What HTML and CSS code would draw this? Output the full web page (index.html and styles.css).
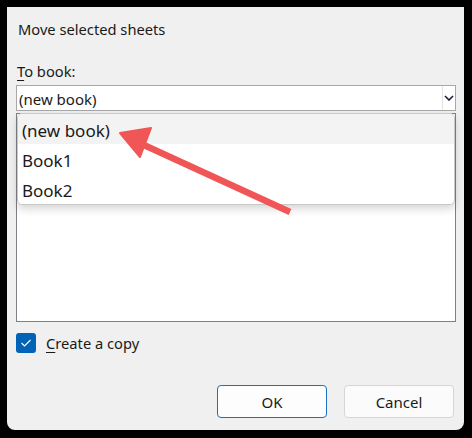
FILE: index.html
```html
<!DOCTYPE html>
<html>
<head>
<meta charset="utf-8">
<link rel="stylesheet" href="styles.css">
</head>
<body>
<div class="dialog">
  <div class="title">Move selected sheets</div>
  <div class="label"><u>T</u>o book:</div>
  <div class="combo">
    <span class="combo-text">(new book)</span>
    <span class="combo-btn">
      <svg width="10" height="6" viewBox="0 0 10 6"><path d="M1 1 L5 5 L9 1" fill="none" stroke="#1b1b3a" stroke-width="1.6"/></svg>
    </span>
  </div>
  <div class="list-area">
    <div class="listbox"></div>
    <div class="popup">
      <div class="item active">(new book)</div>
      <div class="item">Book1</div>
      <div class="item">Book2</div>
    </div>
  </div>
  <div class="check-row">
    <span class="checkbox">
      <svg width="12" height="10" viewBox="0 0 12 10"><path d="M1.5 5 L4.5 8 L10.5 2" fill="none" stroke="#ffffff" stroke-width="1.1"/></svg>
    </span>
    <span class="check-label"><u>C</u>reate a copy</span>
  </div>
  <div class="buttons">
    <button class="btn primary">OK</button>
    <button class="btn">Cancel</button>
  </div>
</div>
<svg class="annot" width="472" height="438" viewBox="0 0 472 438">
  <line x1="133" y1="140" x2="290" y2="212" stroke="#f05656" stroke-width="6.5" stroke-linecap="butt"/>
  <polygon points="120,133 151,128 140,157" fill="#f05656" stroke="#f05656" stroke-width="2" stroke-linejoin="round"/>
</svg>
</body>
</html>
```
FILE: styles.css
```css
html, body {
  margin: 0;
  padding: 0;
}
body {
  width: 472px;
  height: 438px;
  background: #000000;
  font-family: "Noto Sans", "Open Sans", sans-serif;
  color: #1a1a1a;
  position: relative;
  overflow: hidden;
}
.dialog {
  position: relative;
  margin: 7px 0 0 7px;
  width: 457px;
  height: 423px;
  box-sizing: border-box;
  padding: 0 8px 0 9px;
  background: #f0f0f0;
  border-radius: 0 0 8px 8px;
  display: flex;
  flex-direction: column;
}
.title {
  margin-top: 12px;
  font-size: 14.7px;
  line-height: 20px;
  padding-left: 2px;
}
.label {
  margin-top: 22px;
  font-size: 14.7px;
  line-height: 20px;
  padding-left: 1px;
}
.label u, .check-label u {
  text-decoration-thickness: 1px;
  text-underline-offset: 3px;
}
.combo {
  margin-top: 4px;
  height: 26px;
  box-sizing: border-box;
  border: 1px solid #a8a8a8;
  background: #ffffff;
  display: flex;
  align-items: center;
  width: 440px;
}
.combo-text {
  flex: 1;
  font-size: 15px;
  line-height: 20px;
  padding-left: 2px;
  padding-top: 1px;
}
.combo-btn {
  width: 12px;
  height: 24px;
  border-left: 1px solid #e2e2e2;
  display: flex;
  align-items: center;
  justify-content: center;
}
.list-area {
  position: relative;
  margin-top: 2px;
  width: 440px;
}
.listbox {
  height: 209px;
  box-sizing: border-box;
  border: 1px solid #7f8085;
  background: #ffffff;
}
.popup {
  position: absolute;
  top: 0;
  left: 1px;
  width: 438px;
  box-sizing: border-box;
  border: 1px solid #c9c9c9;
  border-radius: 5px;
  background: #ffffff;
  box-shadow: 0 4px 9px rgba(0, 0, 0, 0.16);
  overflow: hidden;
}
.item {
  height: 30px;
  line-height: 34px;
  font-size: 17px;
  padding-left: 4px;
  color: #1a1a1a;
  overflow: visible;
}
.item.active {
  background: #f3f3f3;
}
.check-row {
  margin-top: 11px;
  display: flex;
  align-items: center;
  height: 20px;
}
.checkbox {
  width: 20px;
  height: 20px;
  border-radius: 3px;
  background: #0063b8;
  display: flex;
  align-items: center;
  justify-content: center;
}
.check-label {
  margin-left: 10px;
  font-size: 14.7px;
  line-height: 20px;
}
.buttons {
  margin-top: 32px;
  display: flex;
  justify-content: flex-end;
  gap: 17px;
  padding-right: 2px;
}
.btn {
  width: 110px;
  height: 33px;
  box-sizing: border-box;
  border: 1px solid #d6d6d6;
  border-radius: 4px;
  background: #fbfbfb;
  font-family: "Noto Sans", "Open Sans", sans-serif;
  font-size: 15px;
  color: #1a1a1a;
  padding: 0;
}
.btn.primary {
  border: 1px solid #1c6fc2;
  background: #fdfdfd;
}
.annot {
  position: absolute;
  left: 0;
  top: 0;
  pointer-events: none;
}
```
